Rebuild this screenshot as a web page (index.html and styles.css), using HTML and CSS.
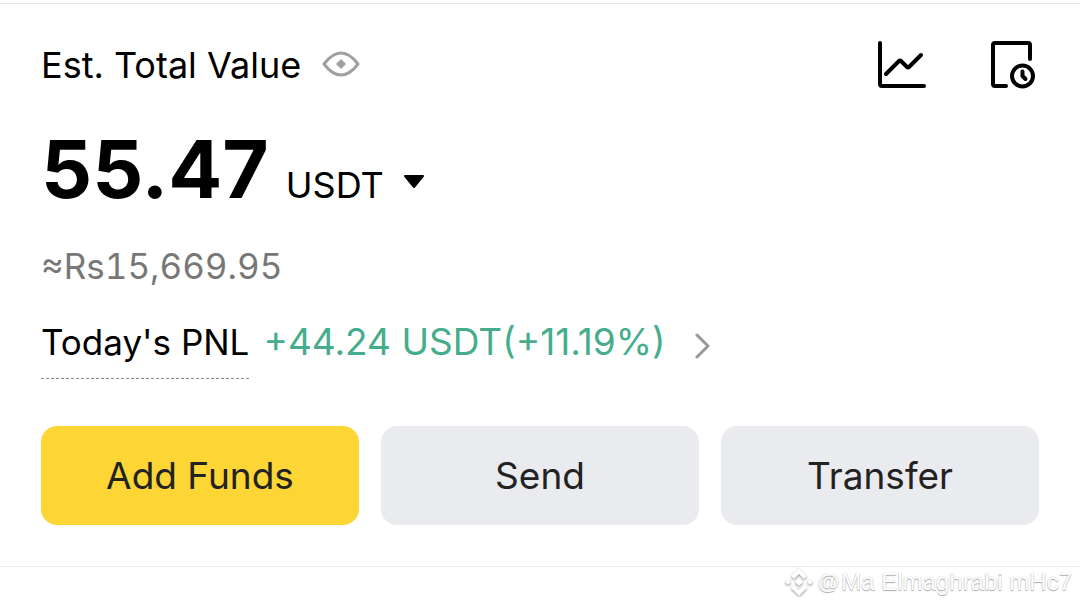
FILE: index.html
```html
<!DOCTYPE html>
<html lang="en">
<head>
<meta charset="utf-8">
<meta name="viewport" content="width=device-width, initial-scale=1">
<title>Wallet overview</title>
<link rel="stylesheet" href="styles.css">
</head>
<body>
<main class="wallet">
  <header class="top">
    <h1 class="label">Est. Total Value</h1>
    <button class="icon-button" type="button" aria-label="Hide balance">
      <svg width="38" height="28" viewBox="0 0 38 28" fill="none"><path d="M2 13C8 5 13.500 2 19 2S30 5 36 13C30 21 24.500 24 19 24S8 21 2 13Z" stroke="#a0a0a0" stroke-width="3" stroke-linejoin="round"/><path d="M19 8.500L23.500 13L19 17.500L14.500 13Z" fill="#a0a0a0" stroke="#a0a0a0" stroke-linejoin="round"/></svg>
    </button>
    <nav class="tools" aria-label="Account tools">
      <button class="icon-button" type="button" aria-label="Analysis">
        <svg width="50" height="50" viewBox="0 0 50 50" fill="none" stroke="#000" stroke-width="4" stroke-linecap="round" stroke-linejoin="round"><path d="M3 3V44Q3 46 5 46H47M9 34L22 21Q23 20 24 21L30 27Q31 28 32 27L44 15"/></svg>
      </button>
      <button class="icon-button" type="button" aria-label="History">
        <svg width="50" height="50" viewBox="0 0 50 50" fill="none" stroke="#000" stroke-width="4" stroke-linecap="round" stroke-linejoin="round"><path d="M19 46H8Q6 46 6 44V5Q6 3 8 3H41Q43 3 43 5V19"/><circle cx="35.500" cy="36" r="10.500"/><path d="M35.500 31.500V36L38.500 39"/></svg>
      </button>
    </nav>
  </header>
  <section class="balance">
    <span class="amount">55.47</span>
    <button class="currency" type="button">USDT
      <svg width="20" height="22" viewBox="0 0 20 22"><path d="M1 2H19L10 13Z" stroke="#000" stroke-width="2" stroke-linejoin="round"/></svg>
    </button>
  </section>
  <p class="fiat">≈Rs15,669.95</p>
  <section class="pnl">
    <span class="pnl-label">Today's PNL</span>
    <a class="pnl-value" href="#pnl">+44.24 USDT(+11.19%)
      <svg width="16" height="36" viewBox="0 0 16 36" fill="none"><path d="M2 11L13 22L2 33" stroke="#999" stroke-width="3" stroke-linecap="round" stroke-linejoin="round"/></svg>
    </a>
  </section>
  <section class="actions">
    <button class="action primary" type="button">Add Funds</button>
    <button class="action" type="button">Send</button>
    <button class="action" type="button">Transfer</button>
  </section>
</main>
<footer class="credit">
  <svg class="credit-mark" width="30" height="30" viewBox="0 0 30 30" fill="#fff"><path d="M15 1L23 9L20 12L15 7L10 12L7 9ZM15 29L23 21L20 18L15 23L10 18L7 21ZM4 12L7 15L4 18L1 15ZM26 12L29 15L26 18L23 15ZM15 11L19 15L15 19L11 15Z"/></svg>
  <span class="at">@</span><span>Ma Elmaghrabi mHc7</span>
</footer>
</body>
</html>
```
FILE: styles.css
```css
* { box-sizing: border-box; }
body {
  margin: 0;
  padding-top: 3px;
  background: #fff;
  color: #000;
  font-family: Inter, "Noto Sans", sans-serif;
  font-size: 36px;
  line-height: 48px;
}
button { padding: 0; border: 0; background: none; color: inherit; font: inherit; }
svg { display: block; flex: none; }
.wallet {
  padding: 35px 41px 41px;
  border-top: 1px solid #e6e6e6;
  border-bottom: 1px solid #eaeaea;
}
.top { display: flex; align-items: center; gap: 21px; height: 52px; }
.label { margin: 0; font-size: 36px; font-weight: 400; }
.tools { display: flex; gap: 60px; margin-left: auto; padding-right: 2px; }
.balance { display: flex; align-items: baseline; gap: 17px; margin-top: 28px; }
.amount { font-size: 80px; font-weight: 700; line-height: 100px; }
.currency { display: flex; align-items: center; gap: 20px; }
.fiat { margin: 23px 0 0; color: #777; font-size: 35px; font-variant-numeric: tabular-nums; }
.pnl { display: flex; align-items: flex-start; gap: 14px; margin-top: 28px; }
.pnl-label { padding-bottom: 12px; border-bottom: 1px dashed #888; font-size: 35px; }
.pnl-value { display: flex; align-items: center; gap: 29px; color: #45ad8c; text-decoration: none; font-size: 37px; }
.actions { display: grid; grid-template-columns: repeat(3, 1fr); gap: 22px; margin-top: 47px; }
.action { height: 99px; border-radius: 16px; background: #eaebef; color: #222; font-size: 37px; }
.primary { background: #fdd535; }
.credit {
  display: flex;
  align-items: center;
  justify-content: flex-end;
  padding-right: 8px;
  color: #fff;
  font-family: "Liberation Sans", sans-serif;
  font-size: 24px;
  line-height: 30px;
  text-shadow: 0 0 1px #aaa, 0 1px 1px #aaa;
}
.credit-mark { margin-right: 4px; filter: drop-shadow(0 1px 1px #888); }
.at { margin-right: 2px; font-weight: 700; font-size: 22px; }
```
